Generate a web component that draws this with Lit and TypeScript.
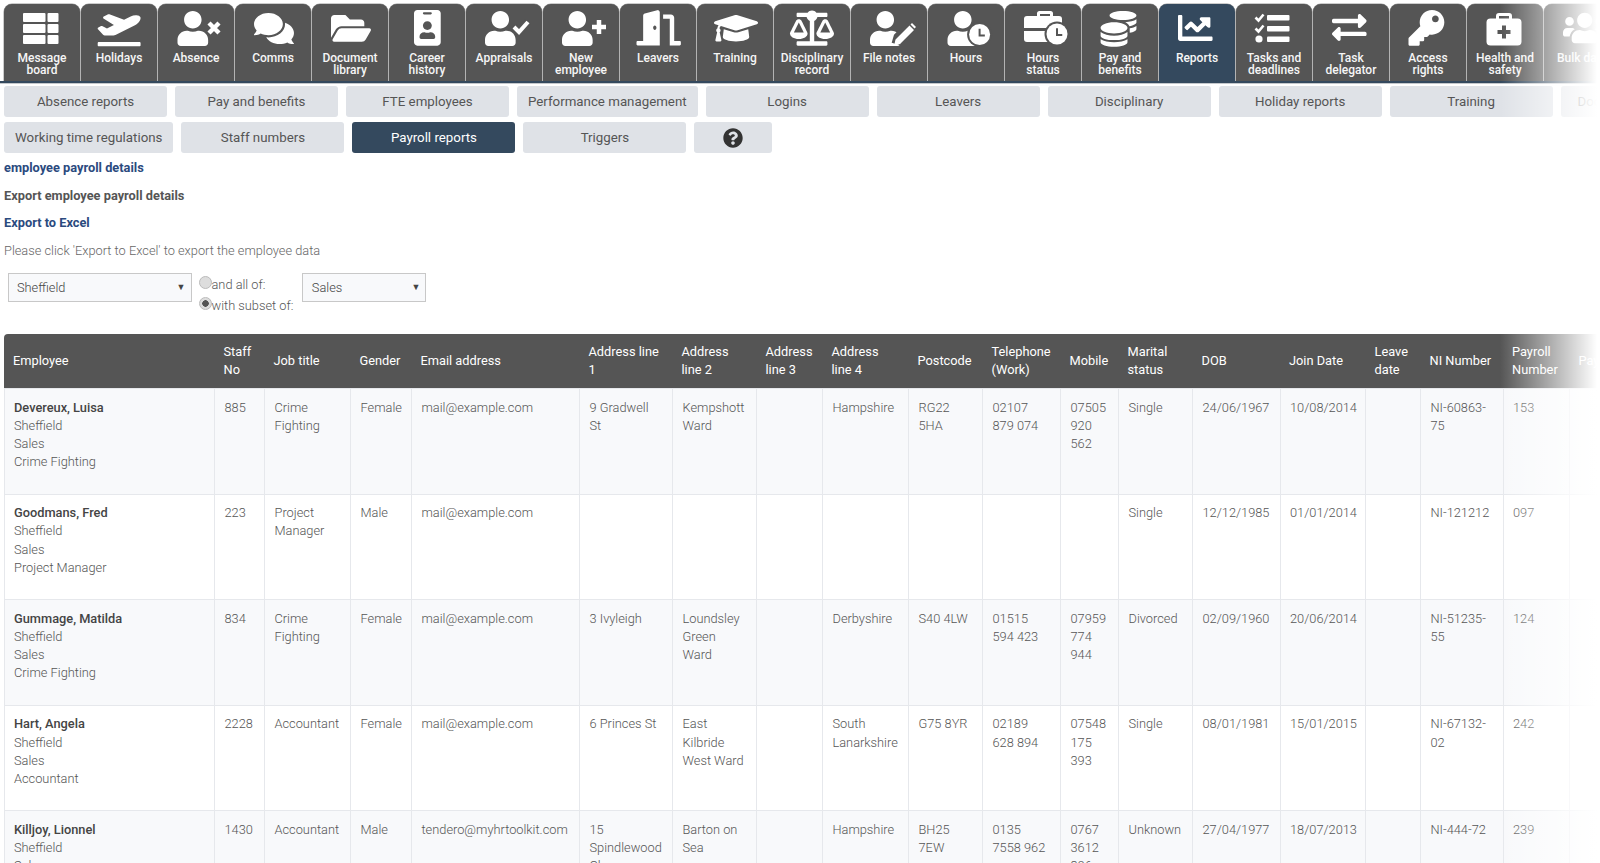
import { LitElement, html, css, svg } from 'lit';
import { customElement } from 'lit/decorators.js';

const USER = 'M224 256c70.7 0 128-57.3 128-128S294.7 0 224 0 96 57.3 96 128s57.3 128 128 128zm89.6 32h-16.7c-22.2 10.2-46.9 16-72.9 16s-50.6-5.8-72.9-16h-16.7C60.2 288 0 348.2 0 422.4V464c0 26.5 21.5 48 48 48h352c26.5 0 48-21.5 48-48v-41.6c0-74.2-60.2-134.4-134.4-134.4z';

// one scaled font-awesome style path
const fa = (x: number, y: number, s: number, d: string) =>
  svg`<path transform="translate(${x} ${y}) scale(${s})" d=${d}></path>`;

const person = (x: number) => fa(x, 2, 0.0684, USER);

const clock = (cx: number, cy: number, r: number) => svg`
  <circle cx=${cx} cy=${cy} r=${r + 2} fill="#555"></circle>
  <circle cx=${cx} cy=${cy} r=${r}></circle>
  <path d="M${cx} ${cy - r * 0.55}V${cy + 1}H${cx + r * 0.5}" fill="none" stroke="#555" stroke-width="2"></path>`;

const ICONS: Record<string, unknown> = {
  board: svg`
    <rect x="7" y="4" width="22.5" height="9" rx="1"></rect><rect x="31.5" y="4" width="11" height="9" rx="1"></rect>
    <rect x="7" y="15" width="22.5" height="9" rx="1"></rect><rect x="31.5" y="15" width="11" height="9" rx="1"></rect>
    <rect x="7" y="26" width="22.5" height="9" rx="1"></rect><rect x="31.5" y="26" width="11" height="9" rx="1"></rect>`,
  plane: fa(4.7, 3, 0.067, 'M624 448H16c-8.84 0-16 7.16-16 16v32c0 8.84 7.16 16 16 16h608c8.84 0 16-7.16 16-16v-32c0-8.84-7.16-16-16-16zM80.55 341.27c6.28 6.84 15.1 10.72 24.33 10.71l130.54-.18a65.62 65.62 0 0 0 29.64-7.12l290.96-147.65c26.74-13.57 50.71-32.94 67.02-58.31 18.31-28.48 20.3-49.09 13.07-63.65-7.21-14.57-24.74-25.27-58.25-27.45-29.85-1.94-59.54 5.92-86.28 19.48l-98.51 49.99-218.7-82.06a17.799 17.799 0 0 0-18-1.11L90.62 67.29c-10.67 5.41-13.25 19.65-5.17 28.53l156.22 98.1-103.21 52.38-72.35-36.47a17.804 17.804 0 0 0-16.07.02L9.91 230.22c-10.44 5.3-13.19 19.12-5.57 28.08l76.21 82.97z'),
  absence: svg`${person(7.5)}<path d="M39 14l10 10M49 14L39 24" fill="none" stroke="#fff" stroke-width="4.4"></path>`,
  comms: fa(7, 1.8, 0.0694, 'M416 192c0-88.4-93.1-160-208-160S0 103.6 0 192c0 34.3 14.1 65.9 38 92-13.4 30.2-35.5 54.2-35.8 54.5-2.2 2.3-2.8 5.7-1.5 8.7S4.8 352 8 352c36.6 0 66.9-12.3 88.7-25 32.2 15.7 70.3 25 111.3 25 114.9 0 208-71.6 208-160zm122 220c23.9-26 38-57.7 38-92 0-66.9-53.5-124.2-129.3-148.1.9 6.6 1.3 13.3 1.3 20.1 0 105.9-107.7 192-240 192-10.8 0-21.3-.8-31.7-1.9C207.8 439.6 281.8 480 368 480c41 0 79.1-9.2 111.3-25 21.8 12.7 52.1 25 88.7 25 3.2 0 6.1-1.9 7.3-4.8 1.3-2.9.7-6.3-1.5-8.7-.3-.3-22.4-24.2-35.8-54.5z'),
  folder: fa(7, 1.6, 0.0694, 'M572.694 292.093L500.27 416.248A63.997 63.997 0 0 1 444.989 448H45.025c-18.523 0-30.064-20.093-20.731-36.093l72.424-124.155A64 64 0 0 1 152 256h399.964c18.523 0 30.064 20.093 20.73 36.093zM152 224h328v-48c0-26.51-21.49-48-48-48H272l-64-64H48C21.49 64 0 85.49 0 112v278.046l69.077-118.418C86.214 242.25 117.989 224 152 224z'),
  badge: fa(13, 1, 0.0696, 'M336 0H48C21.5 0 0 21.5 0 48v416c0 26.5 21.5 48 48 48h288c26.5 0 48-21.5 48-48V48c0-26.5-21.5-48-48-48zM144 32h96c8.8 0 16 7.2 16 16s-7.2 16-16 16h-96c-8.8 0-16-7.2-16-16s7.2-16 16-16zm48 128c35.3 0 64 28.7 64 64s-28.7 64-64 64-64-28.7-64-64 28.7-64 64-64zm112 236.8c0 10.6-10 19.2-22.4 19.2H102.4C90 416 80 407.4 80 396.8v-19.2c0-31.8 30.1-57.6 67.2-57.6h5c12.3 5.1 25.7 8 39.8 8s27.6-2.9 39.8-8h5c37.1 0 67.2 25.8 67.2 57.6v19.2z'),
  appraise: svg`${person(7)}<path d="M36 18l5 5 9-10" fill="none" stroke="#555" stroke-width="8"></path><path d="M36 18l5 5 9-10" fill="none" stroke="#fff" stroke-width="4"></path>`,
  newuser: svg`${person(7)}<path d="M44 11v14M37 18h14" fill="none" stroke="#fff" stroke-width="4.5"></path>`,
  door: fa(4.5, 1, 0.0693, 'M624 448h-80V113.45C544 86.19 522.47 64 496 64H384v64h96v384h144c8.84 0 16-7.16 16-16v-32c0-8.84-7.16-16-16-16zM312.24 1.01l-192 49.74C105.99 54.44 96 67.7 96 82.92V448H16c-8.84 0-16 7.16-16 16v32c0 8.84 7.16 16 16 16h319.99V33.18c0-21.58-19.56-37.41-40.75-32.17zM264 288c-13.25 0-24-14.33-24-32s10.75-32 24-32 24 14.33 24 32-10.75 32-24 32z'),
  cap: fa(5, 1.6, 0.0688, 'M622.34 153.2L343.4 67.5c-15.2-4.67-31.6-4.67-46.79 0L17.66 153.2c-23.54 7.23-23.54 38.36 0 45.59l48.63 14.94c-10.67 13.19-17.23 29.28-17.88 46.9C38.78 266.15 32 276.11 32 288c0 10.78 5.68 19.85 13.86 25.65L20.33 428.53C18.11 438.52 25.71 448 35.94 448h56.11c10.24 0 17.84-9.48 15.62-19.47L82.14 313.65C90.32 307.85 96 298.78 96 288c0-11.57-6.47-21.25-15.66-26.87.76-15.02 8.44-28.3 20.69-36.72L296.6 284.5c9.06 2.78 26.44 6.25 46.79 0l278.95-85.7c23.55-7.24 23.55-38.36 0-45.6zM352.79 315.09c-28.53 8.76-52.84 3.92-65.59 0l-145.02-44.55L128 384c0 35.35 85.96 64 192 64s192-28.65 192-64l-14.18-113.47-145.03 44.56z'),
  scale: fa(4, 1.5, 0.0688, 'M256 336h-.02c0-16.18 1.34-8.73-85.05-181.51-17.65-35.29-68.19-35.36-85.87 0C-2.06 328.75.02 320.33.02 336H0c0 44.18 57.31 80 128 80s128-35.82 128-80zM128 176l72 144H56l72-144zm511.98 160c0-16.18 1.34-8.73-85.05-181.51-17.65-35.29-68.19-35.36-85.87 0-87.12 174.26-85.04 165.84-85.04 181.51H384c0 44.18 57.31 80 128 80s128-35.82 128-80h-.02zM440 320l72-144 72 144H440zm88 128H352V153.25c23.51-10.29 41.16-31.48 46.39-57.25H528c8.84 0 16-7.16 16-16V48c0-8.84-7.16-16-16-16H383.64C369.04 12.68 346.09 0 320 0s-49.04 12.68-63.64 32H112c-8.84 0-16 7.16-16 16v32c0 8.84 7.16 16 16 16h129.61c5.23 25.76 22.87 46.96 46.39 57.25V448H112c-8.84 0-16 7.16-16 16v32c0 8.84 7.16 16 16 16h416c8.84 0 16-7.16 16-16v-32c0-8.84-7.16-16-16-16z'),
  notes: svg`${person(7)}<path d="M33 35l2-7L47 16" fill="none" stroke="#555" stroke-width="9"></path><path d="M31 37l1.5-6.5L46.5 16.5 51 21 37 35z M47.5 15.5l1.5-1.5 4 4-1.5 1.5z"></path>`,
  hours: svg`${person(7.5)}${clock(39.6, 25.5, 10.5)}`,
  brief: svg`
    <path d="M19 7V4.5A2.5 2.5 0 0 1 21.5 2h11A2.5 2.5 0 0 1 35 4.5V7h6a3 3 0 0 1 3 3v9H6v-9a3 3 0 0 1 3-3zm3 0h10V5H22z" fill-rule="evenodd" transform="translate(1 0)"></path>
    <path d="M7 22h38v8a3 3 0 0 1-3 3H10a3 3 0 0 1-3-3z"></path>
    ${clock(40, 25, 10.5)}`,
  coins: fa(6.6, 2, 0.07, 'M0 405.3V448c0 35.3 86 64 192 64s192-28.7 192-64v-42.7C342.7 434.4 267.2 448 192 448S41.3 434.4 0 405.3zM320 128c106 0 192-28.7 192-64S426 0 320 0 128 28.7 128 64s86 64 192 64zM0 300.4V352c0 35.3 86 64 192 64s192-28.7 192-64v-51.6c-41.3 34-116.9 51.6-192 51.6S41.3 334.4 0 300.4zm416 11c57.3-11.1 96-31.7 96-55.4v-42.7c-23.2 16.4-57.3 27.6-96 34.5v63.6zM192 160C86 160 0 195.8 0 240s86 80 192 80 192-35.8 192-80-86-80-192-80zm219.3 56.3c60-10.7 100.7-31.7 100.7-56.3v-42.7c-35.5 25.1-96.5 38.6-160.7 41.8 29.5 14.3 51.2 33.5 60 57.2z'),
  chart: fa(7, 1.7, 0.0675, 'M496 384H64V80c0-8.84-7.16-16-16-16H16C7.16 64 0 71.16 0 80v336c0 17.67 14.33 32 32 32h464c8.84 0 16-7.16 16-16v-32c0-8.84-7.16-16-16-16zM464 96H345.94c-21.38 0-32.09 25.85-16.97 40.97l32.4 32.4L288 242.75l-73.37-73.37c-12.5-12.5-32.76-12.5-45.25 0l-68.69 68.69c-6.25 6.25-6.25 16.38 0 22.63l22.62 22.62c6.25 6.25 16.38 6.25 22.63 0L192 237.25l73.37 73.37c12.5 12.5 32.76 12.5 45.25 0l96-96 32.4 32.4c15.12 15.12 40.97 4.41 40.97-16.97V112c0-8.84-7.16-16-16-16z'),
  tasks: svg`
    <path d="M7.5 8.5l3 3 5-6M7.5 19.5l3 3 5-6" fill="none" stroke="#fff" stroke-width="2.6"></path>
    <circle cx="11" cy="30" r="3.6"></circle>
    <rect x="19" y="6" width="22.5" height="5.5" rx="1"></rect>
    <rect x="19" y="17" width="22.5" height="5.5" rx="1"></rect>
    <rect x="19" y="27.5" width="22.5" height="5.5" rx="1"></rect>`,
  swap: fa(7, 1.2, 0.0675, 'M0 168v-16c0-13.255 10.745-24 24-24h360V80c0-21.367 25.899-32.042 40.971-16.971l80 80c9.372 9.373 9.372 24.569 0 33.941l-80 80C409.956 271.982 384 261.456 384 240v-48H24c-13.255 0-24-10.745-24-24zm488 152H128v-48c0-21.314-25.862-32.08-40.971-16.971l-80 80c-9.372 9.373-9.372 24.569 0 33.941l80 80C102.057 463.997 128 453.437 128 432v-48h360c13.255 0 24-10.745 24-24v-16c0-13.255-10.745-24-24-24z'),
  key: fa(6.5, 1, 0.07, 'M512 176.001C512 273.203 433.202 352 336 352c-11.22 0-22.19-1.062-32.827-3.069l-24.012 27.014A23.999 23.999 0 0 1 261.223 384H224v40c0 13.255-10.745 24-24 24h-40v40c0 13.255-10.745 24-24 24H24c-13.255 0-24-10.745-24-24v-78.059c0-6.365 2.529-12.47 7.029-16.971l161.802-161.802C163.108 213.814 160 195.271 160 176 160 78.798 238.797.001 335.999 0 433.488-.001 512 78.511 512 176.001zM336 128c0 26.51 21.49 48 48 48s48-21.49 48-48-21.49-48-48-48-48 21.49-48 48z'),
  medkit: svg`
    <path d="M17 10V7a3 3 0 0 1 3-3h10a3 3 0 0 1 3 3v3h-3V7H20v3z"></path>
    <rect x="7.5" y="9.5" width="35" height="27" rx="4"></rect>
    <path d="M25 16.5v13M18.5 23h13" fill="none" stroke="#555" stroke-width="4"></path>`,
  users: fa(7, 1.5, 0.068, 'M96 224c35.3 0 64-28.7 64-64s-28.7-64-64-64-64 28.7-64 64 28.7 64 64 64zm448 0c35.3 0 64-28.7 64-64s-28.7-64-64-64-64 28.7-64 64 28.7 64 64 64zm32 32h-64c-17.6 0-33.5 7.1-45.1 18.6 40.3 22.1 68.9 62 75.1 109.4h66c17.7 0 32-14.3 32-32v-32c0-35.3-28.7-64-64-64zm-256 0c61.9 0 112-50.1 112-112S381.9 32 320 32 208 82.1 208 144s50.1 112 112 112zm76.8 32h-8.3c-20.8 10-43.9 16-68.5 16s-47.6-6-68.5-16h-8.3C179.6 288 128 339.6 128 403.2V432c0 26.5 21.5 48 48 48h288c26.5 0 48-21.5 48-48v-28.8c0-63.6-51.6-115.2-115.2-115.2zm-223.7-13.4C161.5 263.1 145.6 256 128 256H64c-35.3 0-64 28.7-64 64v32c0 17.7 14.3 32 32 32h65.9c6.3-47.4 34.9-87.3 75.2-109.4z'),
};

const TABS: [string, string][] = [
  ['Message board', 'board'], ['Holidays', 'plane'], ['Absence', 'absence'], ['Comms', 'comms'],
  ['Document library', 'folder'], ['Career history', 'badge'], ['Appraisals', 'appraise'],
  ['New employee', 'newuser'], ['Leavers', 'door'], ['Training', 'cap'], ['Disciplinary record', 'scale'],
  ['File notes', 'notes'], ['Hours', 'hours'], ['Hours status', 'brief'], ['Pay and benefits', 'coins'],
  ['Reports', 'chart'], ['Tasks and deadlines', 'tasks'], ['Task delegator', 'swap'], ['Access rights', 'key'],
  ['Health and safety', 'medkit'], ['Bulk data', 'users'],
];

const ROW1 = ['Absence reports', 'Pay and benefits', 'FTE employees', 'Performance management', 'Logins', 'Leavers', 'Disciplinary', 'Holiday reports', 'Training', 'Document downloads'];
const ROW2 = ['Working time regulations', 'Staff numbers', 'Payroll reports', 'Triggers'];

const COLS: [string, number][] = [
  ['Employee', 210.5], ['Staff No', 50], ['Job title', 86], ['Gender', 61], ['Email address', 168],
  ['Address line 1', 93], ['Address line 2', 84], ['Address line 3', 66], ['Address line 4', 86],
  ['Postcode', 74], ['Telephone (Work)', 78], ['Mobile', 58], ['Marital status', 74], ['DOB', 87.5],
  ['Join Date', 85.5], ['Leave date', 55], ['NI Number', 82.5], ['Payroll Number', 66.5], ['Pay', 90],
];

type Row = { name: string; lines: string[]; cells: string[] };

const ROWS: Row[] = [
  { name: 'Devereux, Luisa', lines: ['Sheffield', 'Sales', 'Crime Fighting'], cells: ['885', 'Crime Fighting', 'Female', 'mail@example.com', '9 Gradwell St', 'Kempshott Ward', '', 'Hampshire', 'RG22 5HA', '02107 879 074', '07505 920 562', 'Single', '24/06/1967', '10/08/2014', '', 'NI-60863-75', '153', ''] },
  { name: 'Goodmans, Fred', lines: ['Sheffield', 'Sales', 'Project Manager'], cells: ['223', 'Project Manager', 'Male', 'mail@example.com', '', '', '', '', '', '', '', 'Single', '12/12/1985', '01/01/2014', '', 'NI-121212', '097', ''] },
  { name: 'Gummage, Matilda', lines: ['Sheffield', 'Sales', 'Crime Fighting'], cells: ['834', 'Crime Fighting', 'Female', 'mail@example.com', '3 Ivyleigh', 'Loundsley Green Ward', '', 'Derbyshire', 'S40 4LW', '01515 594 423', '07959 774 944', 'Divorced', '02/09/1960', '20/06/2014', '', 'NI-51235-55', '124', ''] },
  { name: 'Hart, Angela', lines: ['Sheffield', 'Sales', 'Accountant'], cells: ['2228', 'Accountant', 'Female', 'mail@example.com', '6 Princes St', 'East Kilbride West Ward', '', 'South Lanarkshire', 'G75 8YR', '02189 628 894', '07548 175 393', 'Single', '08/01/1981', '15/01/2015', '', 'NI-67132-02', '242', ''] },
  { name: 'Killjoy, Lionnel', lines: ['Sheffield', 'Sales', 'Accountant'], cells: ['1430', 'Accountant', 'Male', 'tendero@myhrtoolkit.com', '15 Spindlewood Close', 'Barton on Sea', '', 'Hampshire', 'BH25 7EW', '0135 7558 962', '0767 3612 306', 'Unknown', '27/04/1977', '18/07/2013', '', 'NI-444-72', '239', ''] },
];

@customElement('app-root')
export class AppRoot extends LitElement {
  static styles = css`
    :host {
      display: block;
      position: relative;
      height: 863px;
      overflow: hidden;
      background: #fff;
      font-family: Roboto, "Liberation Sans", sans-serif;
      font-size: 12.8px;
      color: #555;
    }
    .tabs {
      display: flex;
      gap: 1px;
      padding: 4px 0 0 4px;
      border-bottom: 2px solid #34495e;
      box-shadow: 0 1px 0 #c4c8cc;
      margin-bottom: 3px;
      overflow: hidden;
      width: 1600px;
      box-sizing: border-box;
    }
    .tab {
      flex: 0 0 76px;
      height: 77px;
      box-sizing: border-box;
      background: #555;
      border-radius: 8px 8px 0 0;
      box-shadow: 0 0 0 0.5px #999;
      color: #f6f6f6;
      text-align: center;
      font-size: 12px;
      font-weight: 500;
      line-height: 11.6px;
      padding-top: 5px;
    }
    .tab.on { background: #34495e; }
    .tab svg {
      display: block;
      width: 52px;
      height: 40px;
      margin: 0 auto 4px;
      fill: #fff;
      overflow: visible;
    }
    .tab span { display: block; padding: 0 6px; }
    .sub {
      display: flex;
      gap: 8px;
      padding-left: 4px;
      margin-bottom: 5px;
      white-space: nowrap;
    }
    .sub a {
      flex: 0 0 auto;
      box-sizing: border-box;
      min-width: 163px;
      height: 31px;
      line-height: 31px;
      padding: 0 11px;
      background: #dfe2e7;
      border-radius: 3px;
      text-align: center;
      color: #555;
      font-size: 13.3px;
    }
    .sub a.on { background: #34495e; color: #fff; }
    .sub a.help {
      min-width: 78px;
      display: flex;
      align-items: center;
      justify-content: center;
    }
    .help svg { width: 20px; height: 20px; fill: #333; }
    .info { padding: 1px 0 0 4px; }
    .info p { margin: 0; line-height: 18px; height: 27.5px; }
    .title { font-weight: 700; color: #2b4a7e; }
    .strong { font-weight: 700; color: #555; }
    .link { font-weight: 700; color: #2b4a7e; }
    .note { font-weight: 300; color: #666; }
    .filters {
      display: flex;
      padding: 3.5px 0 0 7.5px;
      gap: 7px;
      height: 64.5px;
      box-sizing: border-box;
    }
    .select {
      box-sizing: border-box;
      height: 29px;
      line-height: 27px;
      border: 1px solid #c8c8c8;
      background: #f8f9fb;
      padding-left: 8.5px;
      font-weight: 300;
      color: #444;
      display: flex;
      justify-content: space-between;
    }
    .select i { font-style: normal; font-size: 9px; padding-right: 5px; color: #444; }
    .w1 { width: 184px; }
    .w2 { width: 124px; margin-left: 2px; }
    .radios { font-weight: 300; color: #555; padding-top: 1px; }
    .radios div { display: flex; align-items: center; height: 21px; }
    .radio {
      box-sizing: border-box;
      width: 13px;
      height: 13px;
      margin-top: -3px;
      border-radius: 50%;
      background: #ddd;
      border: 1px solid #bbb;
    }
    .radio.on { background: radial-gradient(circle, #555 0 3px, #ddd 3.5px); }
    table {
      table-layout: fixed;
      border-collapse: collapse;
      margin-left: 3.5px;
      line-height: 18.2px;
    }
    th {
      background: #555;
      color: #fff;
      font-weight: 400;
      text-align: left;
      padding: 9px 10px 9px 9px;
      height: 55px;
      box-sizing: border-box;
    }
    th:first-child { border-radius: 4px 0 0 0; }
    td {
      vertical-align: top;
      padding: 9.5px 10px 22.3px 9.5px;
      border: 1px solid #e6e8ec;
      font-weight: 300;
      color: #555;
    }
    td b { font-weight: 500; color: #444; display: block; }
    tr:nth-child(odd) td { background: #f8f9fb; }
    .fade {
      position: absolute;
      top: 0;
      right: 0;
      bottom: 0;
      width: 100px;
      background: linear-gradient(to right, rgba(255, 255, 255, 0), #fff 97%);
      pointer-events: none;
    }
  `;

  render() {
    const total = COLS.reduce((sum, c) => sum + c[1], 0);
    return html`
      <nav class="tabs">
        ${TABS.map(([label, icon]) => html`
          <div class="tab ${label === 'Reports' ? 'on' : ''}">
            <svg viewBox="0 0 52 40">${ICONS[icon]}</svg>
            <span>${label}</span>
          </div>`)}
      </nav>
      <div class="sub">
        ${ROW1.map((t) => html`<a>${t}</a>`)}
      </div>
      <div class="sub">
        ${ROW2.map((t) => html`<a class=${t === 'Payroll reports' ? 'on' : ''}>${t}</a>`)}
        <a class="help">
          <svg viewBox="0 0 512 512"><path d="M504 256c0 136.997-111.043 248-248 248S8 392.997 8 256C8 119.083 119.043 8 256 8s248 111.083 248 248zM262.655 90c-54.497 0-89.255 22.957-116.549 63.758-3.536 5.286-2.353 12.415 2.715 16.258l34.699 26.31c5.205 3.947 12.621 3.008 16.665-2.122 17.864-22.658 30.113-35.797 57.303-35.797 20.429 0 45.698 13.148 45.698 32.958 0 14.976-12.363 22.667-32.534 33.976C247.128 238.528 216 254.941 216 296v4c0 6.627 5.373 12 12 12h56c6.627 0 12-5.373 12-12v-1.333c0-28.462 83.186-29.647 83.186-106.667 0-58.002-60.165-102-116.531-102zM256 338c-25.365 0-46 20.635-46 46 0 25.364 20.635 46 46 46s46-20.636 46-46c0-25.365-20.635-46-46-46z"></path></svg>
        </a>
      </div>
      <section class="info">
        <p class="title">employee payroll details</p>
        <p class="strong">Export employee payroll details</p>
        <p class="link">Export to Excel</p>
        <p class="note">Please click 'Export to Excel' to export the employee data</p>
      </section>
      <div class="filters">
        <div class="select w1">Sheffield<i>▼</i></div>
        <div class="radios">
          <div><span class="radio"></span>and all of:</div>
          <div><span class="radio on"></span>with subset of:</div>
        </div>
        <div class="select w2">Sales<i>▼</i></div>
      </div>
      <table style="width:${total}px">
        <colgroup>${COLS.map((c) => html`<col style="width:${c[1]}px" />`)}</colgroup>
        <thead><tr>${COLS.map((c) => html`<th>${c[0]}</th>`)}</tr></thead>
        <tbody>
          ${ROWS.map((r) => html`
            <tr>
              <td><b>${r.name}</b>${r.lines.map((l) => html`${l}<br />`)}</td>
              ${r.cells.map((c) => html`<td>${c}</td>`)}
            </tr>`)}
        </tbody>
      </table>
      <div class="fade"></div>
    `;
  }
}
